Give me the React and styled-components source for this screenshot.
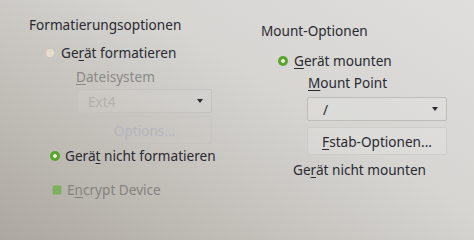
import React from "react";
import styled, { createGlobalStyle } from "styled-components";

const Global = createGlobalStyle`
  html, body { margin: 0; padding: 0; }
  html {
    min-height: 100%;
    background: linear-gradient(32deg, #aca79f 0%, #c6c3be 35%, #d6d5d2 60%, #dfdedc 100%);
  }
  body {
    width: 474px;
    min-height: 225px;
    overflow: hidden;
    font-family: "Noto Sans", "DejaVu Sans", sans-serif;
    font-size: 13.6px;
    color: #2a2a31;
  }
`;

const Page = styled.div`
  display: grid;
  grid-template-columns: 232px 213px;
  padding-left: 29px;
  height: 225px;
`;

const Column = styled.div`
  display: flex;
  flex-direction: column;
  align-items: flex-start;
  padding-top: ${(p) => p.$top}px;
`;

const Heading = styled.div`
  line-height: 17px;
  margin-left: ${(p) => p.$indent || 0}px;
`;

const Row = styled.div`
  display: flex;
  align-items: center;
  line-height: 17px;
  margin-top: ${(p) => p.$gap}px;
  margin-left: ${(p) => p.$indent}px;
  color: ${(p) => (p.$disabled ? "#85837f" : "#2a2a31")};
`;

const Radio = styled.span`
  box-sizing: border-box;
  width: ${(p) => (p.$checked ? 10 : 8)}px;
  height: ${(p) => (p.$checked ? 10 : 8)}px;
  border-radius: 50%;
  margin-right: ${(p) => p.$space}px;
  background: ${(p) =>
    p.$checked
      ? "radial-gradient(circle, #e2ecd6 0 1.6px, #5aa52e 2.2px)"
      : "#e6dccb"};
  flex-shrink: 0;
`;

const Check = styled.span`
  width: 8px;
  height: 8px;
  border-radius: 1.5px;
  margin-right: 6px;
  background: #7fae5e;
  box-shadow: 0 0 0 1px #95b87c;
  flex-shrink: 0;
`;

const Label = styled.div`
  line-height: 17px;
  margin-top: ${(p) => p.$gap}px;
  margin-left: ${(p) => p.$indent}px;
  color: ${(p) => (p.$disabled ? "#8a8986" : "#2a2a31")};
`;

const U = styled.span`
  text-decoration: underline;
  text-underline-offset: 2px;
  text-decoration-thickness: 1px;
`;

const Combo = styled.div`
  box-sizing: border-box;
  display: flex;
  align-items: center;
  justify-content: space-between;
  width: ${(p) => p.$w}px;
  height: 24px;
  margin-top: ${(p) => p.$gap}px;
  margin-left: ${(p) => p.$indent}px;
  padding: 0 8px 0 ${(p) => p.$pad}px;
  border: 1px solid ${(p) => (p.$disabled ? "#c4c2be" : "#bebcb8")};
  border-radius: 2px;
  background: ${(p) => (p.$disabled ? "rgba(255,255,255,0.06)" : "rgba(255,255,255,0.12)")};
  color: ${(p) => (p.$disabled ? "#b3b1ad" : "#2a2a31")};
`;

const Arrow = styled.span`
  width: 0;
  height: 0;
  border-left: 3px solid transparent;
  border-right: 3px solid transparent;
  border-top: 4px solid #2c2c30;
`;

const Button = styled.div`
  box-sizing: border-box;
  display: flex;
  align-items: center;
  justify-content: center;
  width: ${(p) => p.$w}px;
  height: 28px;
  margin-top: ${(p) => p.$gap}px;
  margin-left: ${(p) => p.$indent}px;
  border: 1px solid ${(p) => (p.$disabled ? "rgba(190,188,184,0.35)" : "rgba(200,198,194,0.7)")};
  border-radius: 2px;
  background: ${(p) => (p.$disabled ? "transparent" : "rgba(255,255,255,0.14)")};
  color: ${(p) => (p.$disabled ? "#b4b5bd" : "#2a2a31")};
`;

export default function App() {
  return (
    <>
      <Global />
      <Page>
        <Column $top={16}>
          <Heading>Formatierungsoptionen</Heading>
          <Row $gap={11} $indent={17}>
            <Radio $space={7} />
            <span>
              Ge<U>r</U>ät formatieren
            </span>
          </Row>
          <Label $gap={7} $indent={47} $disabled>
            <U>D</U>ateisystem
          </Label>
          <Combo $gap={4} $indent={48} $w={135} $pad={10} $disabled>
            <span>Ext4</span>
            <Arrow />
          </Combo>
          <Button $gap={3} $indent={48} $w={135} $disabled>
            <span>Options...</span>
          </Button>
          <Row $gap={3} $indent={21}>
            <Radio $checked $space={5} />
            <span>
              Gerä<U>t</U> nicht formatieren
            </span>
          </Row>
          <Row $gap={17} $indent={24} $disabled>
            <Check />
            <span>
              E<U>n</U>crypt Device
            </span>
          </Row>
        </Column>
        <Column $top={22}>
          <Heading>Mount-Optionen</Heading>
          <Row $gap={13} $indent={17}>
            <Radio $checked $space={6} />
            <span>
              <U>G</U>erät mounten
            </span>
          </Row>
          <Label $gap={5} $indent={47}>
            <U>M</U>ount Point
          </Label>
          <Combo $gap={6} $indent={46} $w={140} $pad={15}>
            <span>/</span>
            <Arrow />
          </Combo>
          <Button $gap={6} $indent={46} $w={140}>
            <span>
              <U>F</U>stab-Optionen...
            </span>
          </Button>
          <Label $gap={6} $indent={32}>
            Ge<U>r</U>ät nicht mounten
          </Label>
        </Column>
      </Page>
    </>
  );
}
